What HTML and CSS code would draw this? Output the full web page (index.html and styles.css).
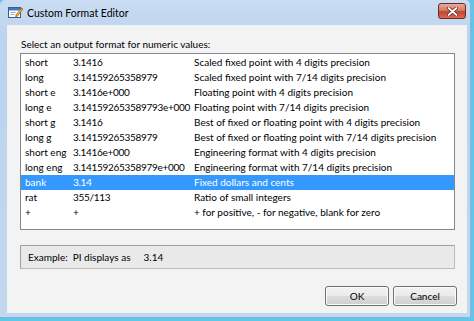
FILE: index.html
```html
<!DOCTYPE html>
<html lang="en">
<head>
  <meta charset="UTF-8" />
  <title>Custom Format Editor</title>
  <link rel="stylesheet" href="styles.css">
</head>
<body>

<div class="window">
  <div class="titlebar">
    <svg class="app-icon" width="15" height="14" viewBox="0 0 15 14">
      <rect x="0.5" y="2.5" width="12" height="10" fill="#fff" stroke="#3a5f8f"/>
      <rect x="1" y="3" width="11" height="2.5" fill="#3d78c8"/>
      <rect x="2.5" y="7" width="5" height="1" fill="#9ab"/>
      <rect x="2.5" y="9" width="4" height="1" fill="#9ab"/>
      <path d="M8 10 L13 3.5 L14.5 4.8 L9.5 11.2 L7.6 11.6 Z" fill="#f2b53a" stroke="#8a5a10" stroke-width="0.7"/>
      <path d="M13 3.5 L13.8 2.5 L15 3.7 L14.5 4.8 Z" fill="#d44"/>
    </svg>
    <span class="title">Custom Format Editor</span>
    <div class="close-btn">
      <svg width="11" height="9" viewBox="0 0 11 9">
        <path d="M1.5 1 L9.5 8 M9.5 1 L1.5 8" stroke="#5a1a1a" stroke-width="3.2" stroke-linecap="round"/>
        <path d="M1.5 1 L9.5 8 M9.5 1 L1.5 8" stroke="#fff" stroke-width="1.8" stroke-linecap="round"/>
      </svg>
    </div>
  </div>

  <div class="client">
    <div class="prompt">Select an output format for numeric values:</div>

    <div class="list">
      <div class="row"><span>short</span><span class="val">3.1416</span><span>Scaled fixed point with 4 digits precision</span></div>
      <div class="row"><span>long</span><span class="val">3.14159265358979</span><span>Scaled fixed point with 7/14 digits precision</span></div>
      <div class="row"><span>short e</span><span class="val">3.1416e+000</span><span>Floating point with 4 digits precision</span></div>
      <div class="row"><span>long e</span><span class="val">3.141592653589793e+000</span><span>Floating point with 7/14 digits precision</span></div>
      <div class="row"><span>short g</span><span class="val">3.1416</span><span>Best of fixed or floating point with 4 digits precision</span></div>
      <div class="row"><span>long g</span><span class="val">3.14159265358979</span><span>Best of fixed or floating point with 7/14 digits precision</span></div>
      <div class="row"><span>short eng</span><span class="val">3.1416e+000</span><span>Engineering format with 4 digits precision</span></div>
      <div class="row"><span>long eng</span><span class="val">3.14159265358979e+000</span><span>Engineering format with 7/14 digits precision</span></div>
      <div class="row selected"><span>bank</span><span class="val">3.14</span><span>Fixed dollars and cents</span></div>
      <div class="row"><span>rat</span><span class="val">355/113</span><span>Ratio of small integers</span></div>
      <div class="row"><span>+</span><span class="val">+</span><span>+ for positive, - for negative, blank for zero</span></div>
    </div>

    <div class="example">
      <span>Example:</span><span class="pi">PI displays as</span><span class="value">3.14</span>
    </div>

    <div class="buttons">
      <button>OK</button>
      <button>Cancel</button>
    </div>
  </div>
</div>

</body>
</html>
```

FILE: styles.css
```css
body {
  margin: 0;
  width: 474px;
  height: 321px;
  overflow: hidden;
  background: #5cc8ea;
  font-family: Lato, "Open Sans", sans-serif;
  font-size: 10px;
  color: #000;
}
.window {
  width: 471px;
  height: 318px;
  background: linear-gradient(#c9dcf1, #bcd3ee 40px, #c3d8ef);
  border-radius: 5px 5px 0 0;
  box-sizing: border-box;
  border-right: 1px solid #8fb0d4;
  border-bottom: 1px solid #8fb0d4;
}
.titlebar {
  height: 25px;
  display: flex;
  align-items: center;
  padding-left: 8px;
}
.app-icon {
  margin-right: 4px;
  margin-top: -1px;
}
.title {
  font-size: 10.5px;
  flex: 1;
}
.close-btn {
  width: 26px;
  height: 14px;
  margin-right: 4px;
  margin-top: -3px;
  border: 1px solid #6b2a24;
  border-radius: 3px;
  background: linear-gradient(#e9a99b, #d47b68 45%, #c2452f 55%, #d76a4e);
  display: flex;
  align-items: center;
  justify-content: center;
}
.client {
  margin-left: 7px;
  width: 460px;
  height: 288px;
  background: #f3f3f3;
  padding: 12px 0 0 13px;
  box-sizing: border-box;
}
.prompt {
  height: 15px;
  line-height: 15px;
  padding-left: 1px;
}
.list {
  margin-top: 1px;
  width: 435px;
  height: 177px;
  box-sizing: border-box;
  border: 1px solid #828790;
  background: #fff;
  padding-top: 1px;
}
.row {
  display: grid;
  grid-template-columns: 48px 121px 1fr;
  height: 15px;
  line-height: 15px;
  padding-left: 4px;
  white-space: nowrap;
}
.row .val {
  letter-spacing: -0.3px;
}
.row.selected {
  background: #3399ff;
  color: #fff;
}
.example {
  margin-top: 15px;
  width: 435px;
  height: 24px;
  box-sizing: border-box;
  border: 1px solid #a0a0a0;
  border-right-color: #bcbcbc;
  border-bottom-color: #bcbcbc;
  background: #e9e9e9;
  padding-left: 7px;
  line-height: 22px;
  white-space: nowrap;
}
.pi {
  margin-left: 5px;
}
.value {
  margin-left: 13px;
}
.buttons {
  margin-top: 17px;
  width: 437px;
  display: flex;
  justify-content: flex-end;
  gap: 4px;
}
button {
  width: 64px;
  height: 20px;
  padding: 0;
  font-family: inherit;
  font-size: 10px;
  color: #000;
  border: 1px solid #707070;
  border-radius: 3px;
  background: linear-gradient(#f2f2f2, #ebebeb 50%, #dddddd 50%, #cfcfcf);
  box-shadow: inset 0 0 0 1px #fcfcfc;
}
```
